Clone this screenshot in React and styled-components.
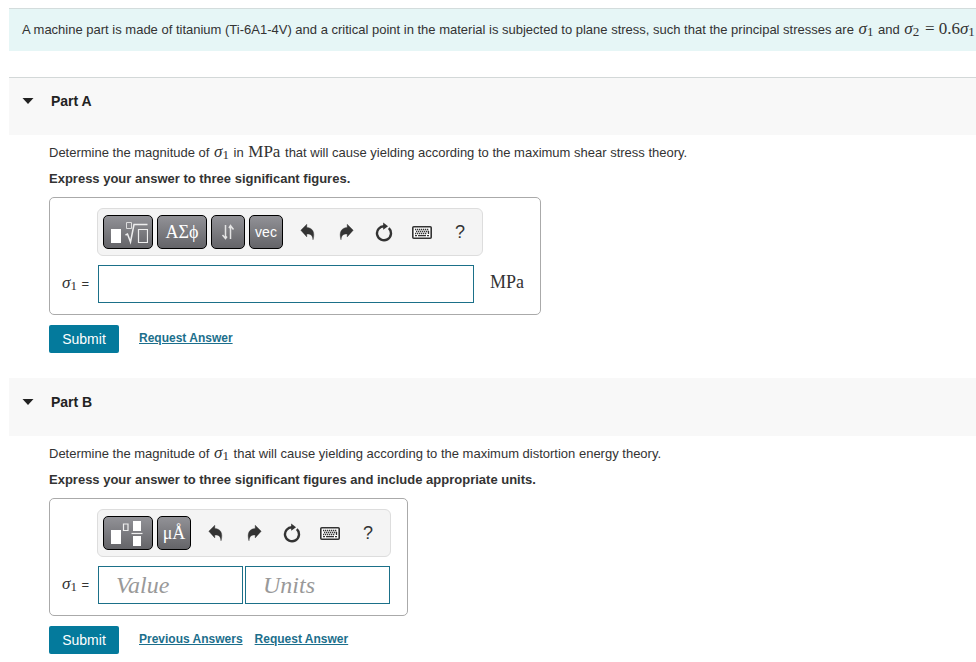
// App.jsx
import React, { useState } from 'react';
import styled, { createGlobalStyle } from 'styled-components';

const UndoIcon = () => (
    <svg width="16" height="18" viewBox="0 0 16 18" aria-hidden="true">
        <path d="M.8 7.200 6.800 1.200v3.300c5.600.2 8.600 4.600 6.200 12.300-.3-4.300-2-5.900-6.200-5.900v3z" fill="#333" stroke="#333" strokeWidth="0.4" />
    </svg>
);

const RedoIcon = () => (
    <svg width="16" height="18" viewBox="0 0 16 18" aria-hidden="true">
        <path d="M15.200 7.200 9.200 1.200v3.300C3.600 4.700.6 9.100 3 16.800c.3-4.300 2-5.900 6.200-5.900v3z" fill="#333" stroke="#333" strokeWidth="0.4" />
    </svg>
);

const ResetIcon = () => (
    <svg width="18" height="20" viewBox="0 0 18 20" aria-hidden="true">
        <path d="M13.800 6.200A7 7 0 1 1 9.500 4.300" fill="none" stroke="#333" strokeWidth="2.4" />
        <path d="M8.200.6 13 4.300 8.200 7.800z" fill="#333" />
    </svg>
);

const KeyboardIcon = () => (
    <svg width="20" height="13" viewBox="0 0 20 13" aria-hidden="true">
        <rect x="0.8" y="0.8" width="18.4" height="11.4" rx="1" fill="#fff" stroke="#333" strokeWidth="1.6" />
        <path d="M3 3.500h14M4 5.500h13M3 7.500h12" stroke="#333" strokeWidth="1.4" strokeDasharray="1.3 0.7" />
        <path d="M3 9.700h2M6 9.700h8M15 9.700h2M16.500 5v3" stroke="#333" strokeWidth="1.3" />
    </svg>
);

const TemplateIcon = () => (
    <svg width="40" height="28" viewBox="0 0 40 28" aria-hidden="true">
        <path d="M3 11h10v14H3z" fill="#fff" />
        <path d="M18.500 4.500h5v6h-5z" fill="none" stroke="#ddd" />
        <path d="M17.500 17l2-1 3 8L26 6.500h13.500" fill="none" stroke="#eee" strokeWidth="1.5" />
        <path d="M30.500 11.500h9v13h-9z" fill="none" stroke="#eee" strokeWidth="1.2" />
    </svg>
);

const FractionIcon = () => (
    <svg width="40" height="28" viewBox="0 0 40 28" aria-hidden="true">
        <path d="M3 11h10v14H3zM25 2h8v10h-8zM25 17h8v10h-8z" fill="#fff" />
        <path d="M15.500 5h4.500v6.500h-4.500z" fill="none" stroke="#eee" strokeWidth="1.2" />
        <path d="M23.500 14.500h11" stroke="#eee" strokeWidth="1.2" />
    </svg>
);

const ArrowsIcon = () => (
    <svg width="14" height="16" viewBox="0 0 14 16" aria-hidden="true">
        <path d="M4.500 1v13M1.500 11l3 3.500L6 12.500M9.500 15V2M8 4l1.500-2.500 3 4" fill="none" stroke="#e4e4e4" strokeWidth="1.5" />
    </svg>
);

const Sigma = ({ index = 1 }) => (
    <MathText><i>σ</i><sub>{index}</sub></MathText>
);

const Toolbar = ({ children }) => (
    <Tools>
        <PaletteGroup>{children}</PaletteGroup>
        <IconButton type="button" aria-label="Undo"><UndoIcon /></IconButton>
        <IconButton type="button" aria-label="Redo"><RedoIcon /></IconButton>
        <IconButton type="button" aria-label="Reset"><ResetIcon /></IconButton>
        <IconButton type="button" aria-label="Keyboard shortcuts"><KeyboardIcon /></IconButton>
        <IconButton type="button" aria-label="Help">?</IconButton>
    </Tools>
);

const Part = ({ title, first, children }) => {
    const [open, setOpen] = useState(true);

    return (
        <section>
            <PartHeader $first={first}>
                <Toggle type="button" aria-expanded={open} onClick={() => setOpen(!open)}>
                    <Caret $open={open} viewBox="0 0 12 6" aria-hidden="true">
                        <path d="M0.500 0h11L6 6z" fill="#222" />
                    </Caret>
                    {title}
                </Toggle>
            </PartHeader>
            {open && <PartBody>{children}</PartBody>}
        </section>
    );
};

const App = () => (
    <>
        <GlobalStyle />
        <Page>
            <Banner>
                A machine part is made of titanium (Ti-6A1-4V) and a critical point in the material is subjected to
                plane stress, such that the principal stresses are <Sigma /> and{' '}
                <Sigma index={2} /> <MathText>= 0.6<i>σ</i><sub>1</sub></MathText>
            </Banner>

            <Part title="Part A" first>
                <Question>
                    Determine the magnitude of <Sigma /> in <MathText>MPa</MathText> that will cause yielding according
                    to the maximum shear stress theory.
                </Question>
                <Instruction>Express your answer to three significant figures.</Instruction>
                <AnswerBox>
                    <Toolbar>
                        <PaletteButton type="button" $wide aria-label="Templates"><TemplateIcon /></PaletteButton>
                        <PaletteButton type="button" $wide $serif>ΑΣϕ</PaletteButton>
                        <PaletteButton type="button" aria-label="Arrows"><ArrowsIcon /></PaletteButton>
                        <PaletteButton type="button">vec</PaletteButton>
                    </Toolbar>
                    <AnswerRow>
                        <AnswerLabel htmlFor="answer-a"><Sigma /> =</AnswerLabel>
                        <Field id="answer-a" type="text" $wide />
                        <Unit>MPa</Unit>
                    </AnswerRow>
                </AnswerBox>
                <Actions>
                    <SubmitButton type="button">Submit</SubmitButton>
                    <ActionLink href="#request-a">Request Answer</ActionLink>
                </Actions>
            </Part>

            <Part title="Part B">
                <Question>
                    Determine the magnitude of <Sigma /> that will cause yielding according to the maximum distortion
                    energy theory.
                </Question>
                <Instruction>Express your answer to three significant figures and include appropriate units.</Instruction>
                <AnswerBox>
                    <Toolbar>
                        <PaletteButton type="button" $wide aria-label="Fractions"><FractionIcon /></PaletteButton>
                        <PaletteButton type="button" $serif>μÅ</PaletteButton>
                    </Toolbar>
                    <AnswerRow>
                        <AnswerLabel htmlFor="answer-b"><Sigma /> =</AnswerLabel>
                        <Field id="answer-b" type="text" placeholder="Value" />
                        <Field type="text" placeholder="Units" aria-label="Units" />
                    </AnswerRow>
                </AnswerBox>
                <Actions>
                    <SubmitButton type="button">Submit</SubmitButton>
                    <ActionLink href="#previous-b">Previous Answers</ActionLink>
                    <ActionLink href="#request-b">Request Answer</ActionLink>
                </Actions>
            </Part>
        </Page>
    </>
);

export default App;

// Styled Components
const GlobalStyle = createGlobalStyle`
    * {
        box-sizing: border-box;
    }

    body {
        margin: 0;
        background: #fff;
        color: #333;
        font-family: "Liberation Sans", Arial, sans-serif;
        font-size: 13px;
    }
`;

const Page = styled.main`
    padding: 8px 0 0 9px;
    overflow: hidden;
`;

const MathText = styled.span`
    margin: 0 1px;
    font-family: "Liberation Serif", "Times New Roman", serif;
    font-size: 17px;
    line-height: 1;

    sub {
        font-size: 13px;
        line-height: 0;
        vertical-align: -2px;
    }
`;

const Banner = styled.div`
    height: 43px;
    padding-left: 13px;
    border-top: 1px solid #d3dcdc;
    background: #e6f6f6;
    line-height: 41px;
    white-space: nowrap; /* The problem statement stays on one line */
    margin-bottom: 26px;
`;

const PartHeader = styled.h2`
    height: 58px;
    margin: 0;
    padding: 15px 13px;
    background: #f8f8f8;
    border-top: 1px solid ${props => (props.$first ? '#d3d8d8' : '#f8f8f8')};
`;

const Toggle = styled.button`
    display: flex;
    align-items: center;
    gap: 17px;
    padding: 0;
    border: none;
    background: none;
    color: #222;
    font-family: inherit;
    font-size: 14px;
    font-weight: bold;
    line-height: 16px;
    cursor: pointer;
`;

const Caret = styled.svg`
    width: 12px;
    height: 6px;
    transform: ${props => (props.$open ? 'none' : 'rotate(-90deg)')};
`;

const PartBody = styled.div`
    padding: 8px 0 25px 40px;
`;

const Question = styled.p`
    margin: 0 0 6px;
    line-height: 20px;
`;

const Instruction = styled.p`
    margin: 0 0 8px;
    font-weight: bold;
    line-height: 20px;
`;

const AnswerBox = styled.div`
    width: fit-content;
    padding: 10px 16px 11px 11px;
    border: 1px solid #aaa;
    border-radius: 5px;
`;

const Tools = styled.div`
    display: flex;
    align-items: center;
    width: fit-content;
    height: 48px;
    margin: 0 0 9px 36px;
    padding: 0 3px 0 5px;
    background: #f4f4f4;
    border: 1px solid #ddd;
    border-radius: 6px;
`;

const PaletteGroup = styled.div`
    display: flex;
    gap: 4px;
    margin-right: 6px;
`;

const PaletteButton = styled.button`
    display: flex;
    align-items: center;
    justify-content: center;
    width: ${props => (props.$wide ? '50px' : '34px')};
    height: 34px;
    padding: 0;
    border: 1px solid #000;
    border-radius: 5px;
    background: linear-gradient(#929297, #646468);
    color: #fff;
    font-family: ${props => (props.$serif ? '"Liberation Serif", "Times New Roman", serif' : 'inherit')};
    font-size: ${props => (props.$serif ? '18px' : '14px')};
    cursor: pointer;
`;

const IconButton = styled.button`
    display: flex;
    align-items: center;
    justify-content: center;
    width: 38px;
    height: 34px;
    padding: 0;
    border: none;
    background: none;
    color: #333;
    font-family: inherit;
    font-size: 18px;
    cursor: pointer;
`;

const AnswerRow = styled.div`
    display: flex;
    align-items: center;
    gap: 2px;
`;

const AnswerLabel = styled.label`
    width: 35px;
    padding-bottom: 4px;
    white-space: nowrap;
`;

const Field = styled.input`
    width: ${props => (props.$wide ? '376px' : '145px')};
    height: 38px;
    padding: 0 17px;
    border: 1px solid #1b7089;
    background: #fff;
    color: #333;
    font-family: "Liberation Serif", "Times New Roman", serif;
    font-size: 24px;

    &::placeholder {
        color: #999;
        font-style: italic;
        opacity: 1;
    }
`;

const Unit = styled.span`
    margin-left: 14px;
    padding-bottom: 4px;
    font-family: "Liberation Serif", "Times New Roman", serif;
    font-size: 18px;
`;

const Actions = styled.div`
    display: flex;
    align-items: center;
    gap: 12px;
    margin-top: 10px;
`;

const SubmitButton = styled.button`
    width: 70px;
    height: 28px;
    margin-right: 8px;
    padding: 0;
    border: none;
    border-radius: 2px;
    background: #047a9c;
    color: #fff;
    font-family: inherit;
    font-size: 14px;
    cursor: pointer;
`;

const ActionLink = styled.a`
    padding-bottom: 2px;
    color: #1c6f8c;
    font-size: 12px;
    font-weight: bold;
    text-decoration: underline;
`;
